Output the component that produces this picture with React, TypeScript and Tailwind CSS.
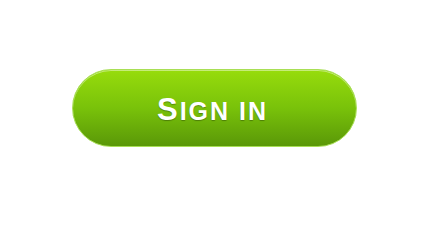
export default function App() {
  return (
    <div className="w-[427px] h-[240px] bg-white pt-[69px] pl-[72px]">
      <button className="w-[285px] h-[78px] rounded-full border border-[#a8df55] bg-gradient-to-b from-[#97dc0c] via-[#79c20a] to-[#5a9808] shadow-[inset_0_1px_0_rgba(255,255,255,0.45)] flex items-center justify-center">
        <span
          className="text-white font-bold uppercase tracking-[2px] leading-none [text-shadow:0_1px_1px_rgba(0,0,0,0.3)] pr-1 mt-[2px]"
          style={{ fontFamily: '"Liberation Sans", Arial, sans-serif' }}
        >
          <span className="text-[31px]">S</span>
          <span className="text-[25px]">ign in</span>
        </span>
      </button>
    </div>
  );
}
